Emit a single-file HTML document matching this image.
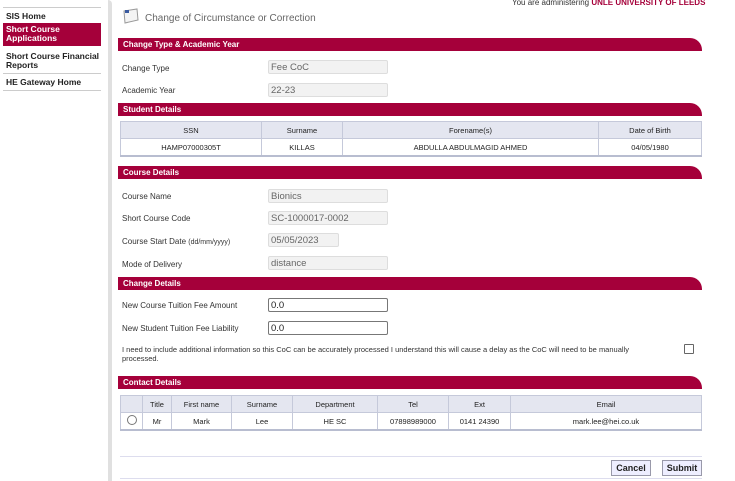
<!DOCTYPE html><html><head><style>
body{margin:0;width:735px;height:481px;background:#fff;font-family:"Liberation Sans",sans-serif;position:relative;overflow:hidden;color:#222}
.a{position:absolute}
.sb{font-size:8.5px;font-weight:bold;left:6px}
.hl{height:1px;background:#ccc;left:3px;width:98px}
.bar{position:absolute;left:118px;width:584px;height:13px;background:#a5003a;border-top-right-radius:12px;color:#fff;font-size:8px;font-weight:bold;line-height:14px;padding-left:5px;box-sizing:border-box}
.lb{position:absolute;left:122px;font-size:8px;color:#333}
.in{position:absolute;left:268px;width:120px;height:14px;background:#f2f2f2;border:1px solid #ddd;border-radius:2px;font-size:9.5px;color:#666;line-height:14px;padding-left:2px;box-sizing:border-box}
.ed{background:#fff;border:1px solid #777;color:#222}
table{position:absolute;border-collapse:collapse;font-size:7.5px;text-align:center}
th{background:#e4e6f0;border:1px solid #c5c9da;font-weight:normal;color:#222;height:16px;padding:0}
td{border:1px solid #c5c9da;height:16px;padding:0;background:#fff}
tr:last-child td{border-bottom:2px solid #b8bdd0}
.btn{position:absolute;top:460px;height:14px;border:1px solid #99a;background:#eef;font-size:9px;font-weight:bold;line-height:14px;text-align:center}
</style></head><body>
<div class="a hl" style="top:7px"></div>
<div class="a sb" style="top:11px">SIS Home</div>
<div class="a" style="left:3px;top:23px;width:98px;height:23px;background:#a5003a"></div>
<div class="a sb" style="top:25px;color:#fff;line-height:9px">Short Course<br>Applications</div>
<div class="a sb" style="top:52px;line-height:9px">Short Course Financial<br>Reports</div>
<div class="a hl" style="top:73px"></div>
<div class="a sb" style="top:77px">HE Gateway Home</div>
<div class="a hl" style="top:90px"></div>
<div class="a" style="left:108px;top:0;width:4px;height:481px;background:#e0e0e0;border-top-right-radius:8px"></div>
<div class="a" style="left:512px;top:-2px;font-size:8px;color:#333">You are administering <span style="color:#a5003a;font-weight:bold">UNLE UNIVERSITY OF LEEDS</span></div>
<svg class="a" style="left:122px;top:8px" width="18" height="16"><path d="M2 3 L15 1 L16 12 L3 15 Z" fill="#f4f4f4" stroke="#999"/><rect x="3" y="2" width="4" height="3" fill="#3a5aa0"/></svg>
<div class="a" style="left:145px;top:13px;font-size:10px;color:#666">Change of Circumstance or Correction</div>
<div class="bar" style="top:38px">Change Type &amp; Academic Year</div>
<div class="lb" style="top:64px">Change Type</div><div class="in" style="top:60px">Fee CoC</div>
<div class="lb" style="top:86px">Academic Year</div><div class="in" style="top:83px">22-23</div>
<div class="bar" style="top:103px">Student Details</div>
<table style="left:120px;top:121px;width:582px"><tr><th style="width:140px">SSN</th><th style="width:80px">Surname</th><th style="width:255px">Forename(s)</th><th>Date of Birth</th></tr>
<tr><td>HAMP07000305T</td><td>KILLAS</td><td>ABDULLA ABDULMAGID AHMED</td><td>04/05/1980</td></tr></table>
<div class="bar" style="top:166px">Course Details</div>
<div class="lb" style="top:192px">Course Name</div><div class="in" style="top:189px">Bionics</div>
<div class="lb" style="top:214px">Short Course Code</div><div class="in" style="top:211px">SC-1000017-0002</div>
<div class="lb" style="top:237px">Course Start Date <span style="font-size:7px">(dd/mm/yyyy)</span></div><div class="in" style="top:233px;width:71px">05/05/2023</div>
<div class="lb" style="top:260px">Mode of Delivery</div><div class="in" style="top:256px">distance</div>
<div class="bar" style="top:277px">Change Details</div>
<div class="lb" style="top:301px">New Course Tuition Fee Amount</div><div class="in ed" style="top:298px">0.0</div>
<div class="lb" style="top:324px">New Student Tuition Fee Liability</div><div class="in ed" style="top:321px">0.0</div>
<div class="lb" style="top:345px;font-size:7.5px;width:540px;line-height:9px">I need to include additional information so this CoC can be accurately processed I understand this will cause a delay as the CoC will need to be manually processed.</div>
<div class="a" style="left:684px;top:344px;width:8px;height:8px;border:1px solid #666;border-radius:1px"></div>
<div class="bar" style="top:376px">Contact Details</div>
<table style="left:120px;top:395px;width:582px"><tr><th style="width:21px"></th><th style="width:28px">Title</th><th style="width:59px">First name</th><th style="width:60px">Surname</th><th style="width:84px">Department</th><th style="width:70px">Tel</th><th style="width:61px">Ext</th><th>Email</th></tr>
<tr><td><span style="display:inline-block;width:8px;height:8px;border:1px solid #777;border-radius:50%"></span></td><td>Mr</td><td>Mark</td><td>Lee</td><td>HE SC</td><td>07898989000</td><td>0141 24390</td><td>mark.lee@hei.co.uk</td></tr></table>
<div class="a" style="left:120px;top:456px;width:582px;height:1px;background:#dde"></div>
<div class="btn" style="left:611px;width:38px">Cancel</div>
<div class="btn" style="left:662px;width:38px">Submit</div>
<div class="a" style="left:120px;top:478px;width:582px;height:1px;background:#dde"></div>
</body></html>
